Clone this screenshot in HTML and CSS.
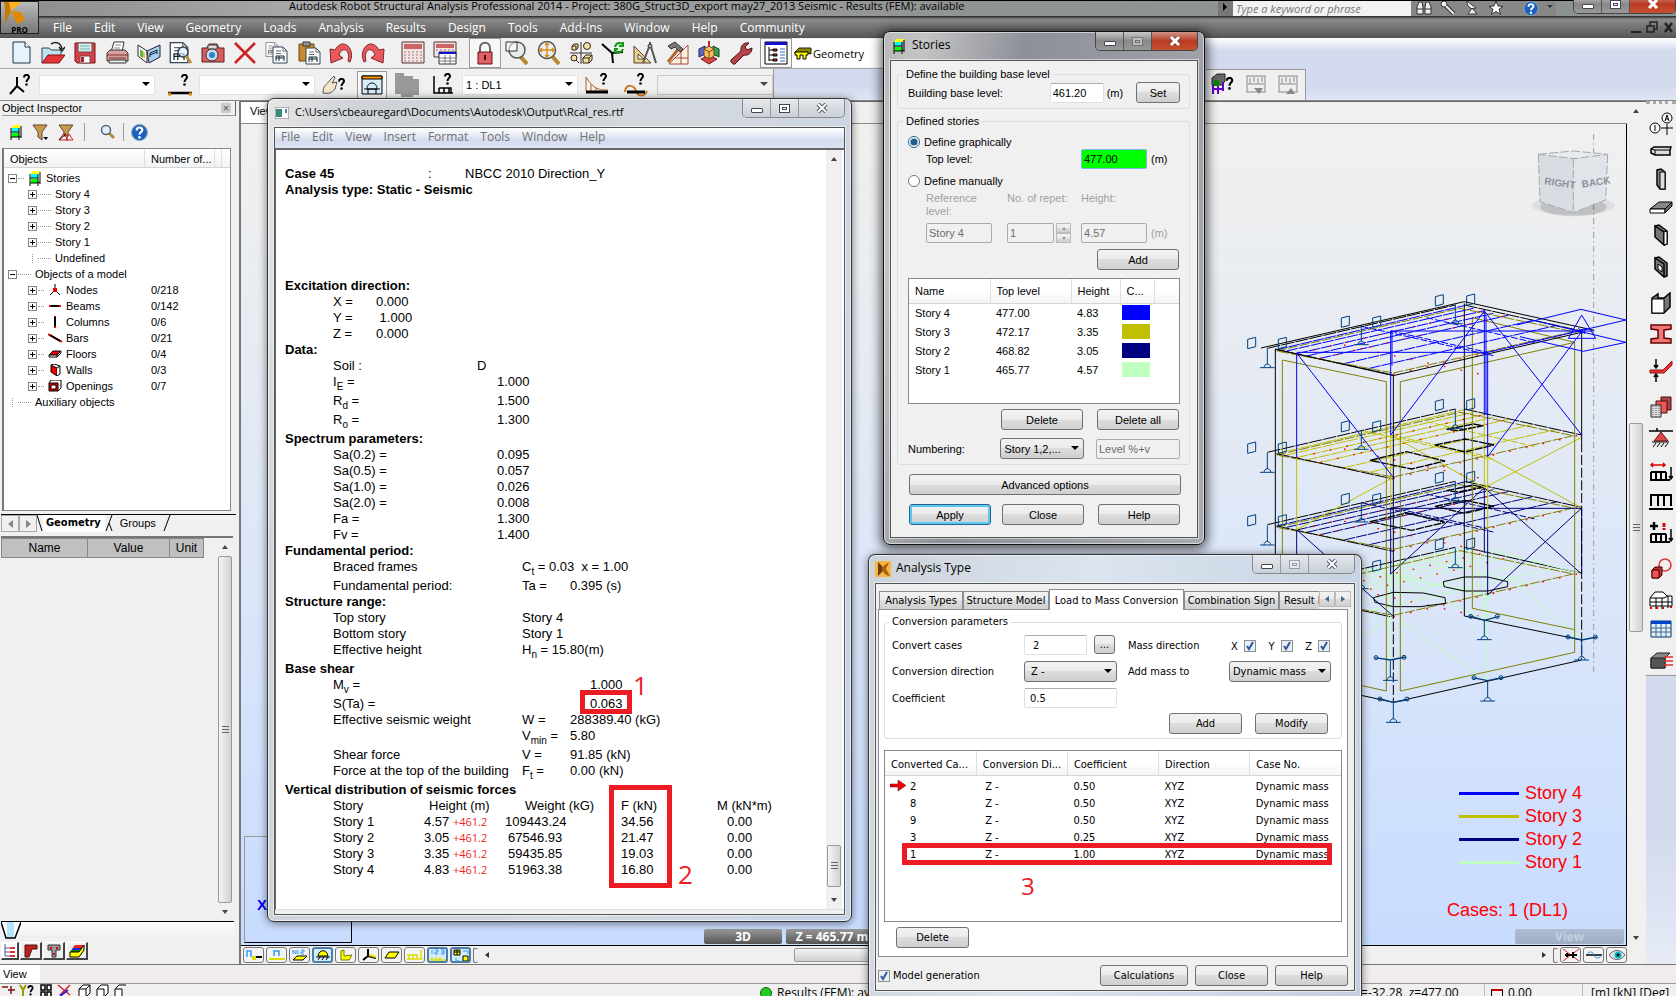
FILE: index.html
```
<!DOCTYPE html>
<html lang="en">
<head>
  <meta charset="UTF-8" />
  <meta name="viewport" content="width=device-width, initial-scale=1.0" />
  <title>Autodesk Robot Structural Analysis Professional 2014</title>
  <link rel="stylesheet" href="styles.css">
</head>
<body>
  <!-- Shared icons -->
  <svg class="defs" width="0" height="0">
    <symbol id="i-story" viewBox="0 0 12 15"><path d="M1 3l3-3h7l-2 3z" fill="#ff0"/><path d="M2 3h7v4H2z" fill="#0ff"/><path d="M2 8h7v4H2z" fill="#0f0"/><path d="M1 3v12M9 3v12M11 1v12M1 7h8M1 12h8l2-1" fill="none" stroke="#000"/></symbol>
    <symbol id="i-help" viewBox="0 0 16 16"><circle cx="8" cy="8" r="7.500" fill="#1d5fc0" stroke="#8ab"/><path d="M5.300 6c0-3.500 5.400-3.500 5.400-.3C10.700 7.600 8 7.600 8 9.800" fill="none" stroke="#fff" stroke-width="2"/><circle cx="8" cy="12.500" r="1.300" fill="#fff"/></symbol>
    <symbol id="i-q" viewBox="0 0 8 12"><path d="M1.500 3.500C1.500 0 6.500 0 6.500 3.200 6.500 5 4 5.500 4 8" fill="none" stroke="#000" stroke-width="2"/><circle cx="4" cy="10.500" r="1.300"/></symbol>
    <symbol id="i-sheet" viewBox="0 0 16 18"><path d="M1 1h10l4 4v12H1z" fill="#fff" stroke="#345"/><path d="M11 1v4h4M4 5h5M4 7.500h5" fill="none" stroke="#666"/><path d="M4 15v-5h8v5M4 12h8M7 10v5" fill="none" stroke="#123"/></symbol>
    <symbol id="i-mag" viewBox="0 0 16 16"><path d="M9 9l5 5" stroke="#b98a3a" stroke-width="3"/><circle cx="6" cy="6" r="4.500" fill="#dff0ff" stroke="#567" stroke-width="1.500"/></symbol>
    <symbol id="i-brick" viewBox="0 0 24 14"><path d="M1 9l9-7h13l-7 7z" fill="#888" stroke="#000"/><path d="M1 9h15v4H1z" fill="#fff" stroke="#000"/><path d="M16 9l7-7v4l-7 7z" fill="#666" stroke="#000"/></symbol>
    <symbol id="i-load" viewBox="0 0 24 20"><path d="M1 18h20M2 10v8M7 10v8M12 10v8M17 10v8M2 10h15" fill="none" stroke="#000" stroke-width="2"/><path d="M22 5v12M20 14l2 3 2-3" fill="none" stroke="#000" stroke-width="1.500"/></symbol>
  </svg>

  <div class="app">
    <!-- Title bar -->
    <header class="titlebar">
      <div class="pro">
        <svg width="34" height="23" viewBox="0 0 34 23"><path d="M3 0h5l2 9-6 13V8z" fill="#c87a00"/><path d="M8 0h13L10 9z" fill="#ffb31a"/><path d="M10 9l10 1 4 8-8 4z" fill="#e08a00"/></svg>
        <b>PRO</b>
      </div>
      <div class="titlebar-text">Autodesk Robot Structural Analysis Professional 2014 - Project: 380G_Struct3D_export may27_2013 Seismic - Results (FEM): available</div>
      <div class="search">
        <span class="search-arrow"></span>
        <input type="text" aria-label="Search" placeholder="Type a keyword or phrase">
      </div>
      <div class="title-icons">
        <svg width="16" height="14" viewBox="0 0 16 14"><path d="M1 13V6l2-5h3l1 5v7zM9 13V6l1-5h3l2 5v7z" fill="#eee" stroke="#333"/><path d="M1 8h6M9 8h6" stroke="#333"/></svg>
        <svg width="16" height="14" viewBox="0 0 16 14"><circle cx="4" cy="3" r="3" fill="#eee" stroke="#333"/><path d="M6 5l8 8" stroke="#333" stroke-width="4"/><path d="M6 5l8 8" stroke="#eee" stroke-width="2"/></svg>
        <svg width="16" height="14" viewBox="0 0 16 14"><path d="M3 0c0 7 5 9 9 7zM8 7l-4 6h9z" fill="#eee" stroke="#333"/></svg>
        <svg width="16" height="14" viewBox="0 0 16 14"><path d="M8 0l2 5 5 .3-4 3 1.500 5L8 10.500 3.500 13.300 5 8.300 1 5.300 6 5z" fill="#fff" stroke="#333"/></svg>
        <svg class="title-help" width="16" height="15"><use href="#i-help"/></svg>
        <i class="caret"></i>
      </div>
      <div class="winbtns dark main-btns">
        <button aria-label="Minimize"><i class="min"></i></button><button aria-label="Restore"><i class="max"></i></button><button class="close" aria-label="Close"><svg width="12" height="10" viewBox="0 0 12 10"><path d="M2 1l8 8M10 1L2 9" stroke="#fff" stroke-width="3"/></svg></button>
      </div>
    </header>

    <!-- Menu -->
    <nav class="menubar">
      <a href="#">File</a><a href="#">Edit</a><a href="#">View</a><a href="#">Geometry</a><a href="#">Loads</a><a href="#">Analysis</a><a href="#">Results</a><a href="#">Design</a><a href="#">Tools</a><a href="#">Add-Ins</a><a href="#">Window</a><a href="#">Help</a><a href="#">Community</a>
      <svg class="mdi" width="46" height="14" viewBox="0 0 46 14"><path d="M1 11h10" stroke="#222" stroke-width="2"/><path d="M17 5h7v6h-7zM20 5V1h7v7h-3" fill="none" stroke="#222" stroke-width="1.500"/><path d="M35 2l7 9M42 2l-7 9" stroke="#222" stroke-width="2.500"/></svg>
    </nav>

    <!-- Toolbars -->
    <div class="toolbars">
      <div class="toolbar">
        <button aria-label="New"><svg width="24" height="24" viewBox="0 0 24 24"><path d="M4 1h12l5 5v16H4z" fill="#e4f3fc" stroke="#234"/><path d="M16 1v5h5" fill="#fff" stroke="#234"/></svg></button>
        <button aria-label="Open"><svg width="24" height="24" viewBox="0 0 24 24"><path d="M1 22V7h7l2 2h10v5" fill="#bfe3f5" stroke="#345"/><path d="M1 22l6-8h17l-6 8z" fill="#e3343c" stroke="#811"/><path d="M10 3c5-3 10-1 11 5M18 6l3 4 3-4" fill="none" stroke="#222" stroke-width="1.500"/></svg></button>
        <button aria-label="Save"><svg width="24" height="24" viewBox="0 0 24 24"><path d="M2 2h20v20H4l-2-2z" fill="#d6404a" stroke="#711"/><path d="M5 2h14v9H5z" fill="#cdeff0" stroke="#744"/><path d="M7 15h10v7H7z" fill="#fff" stroke="#744"/><path d="M8 16h3v5H8z" fill="#a22"/><path d="M7 5h10M7 8h10" stroke="#8aa"/></svg></button>
        <button aria-label="Print"><svg width="24" height="24" viewBox="0 0 24 24"><path d="M6 11L9 1h10l-2 10z" fill="#fff" stroke="#333"/><path d="M2 12l3-3h15l3 3v8H2z" fill="#d9a0a0" stroke="#333"/><path d="M2 14h21M4 17h17" stroke="#733"/><path d="M4 19h17v3H4z" fill="#eee" stroke="#333"/><path d="M10 4h6M9 7h6" stroke="#888"/></svg></button>
        <button aria-label="Printout composition"><svg width="24" height="24" viewBox="0 0 24 24"><path d="M1 4l9 6v12L1 15z" fill="#fff" stroke="#223"/><path d="M3 8l3 2v7l-3-2z" fill="#5b5"/><path d="M6 10l2 2v6l-2-2z" fill="#e6c33a"/><path d="M10 10l13-6v12l-11 6z" fill="#a9cdea" stroke="#223"/><path d="M13 16v-4l7-3v4M13 14l7-3" fill="none" stroke="#124"/></svg></button>
        <button aria-label="Preview"><svg width="24" height="24" viewBox="0 0 24 24"><use href="#i-sheet" width="20" height="23"/><circle cx="14" cy="11" r="5" fill="#dff0ffaa" stroke="#345" stroke-width="1.500"/><path d="M17 15l5 7" stroke="#c08a3a" stroke-width="3"/></svg></button>
        <button aria-label="Screen capture"><svg width="24" height="24" viewBox="0 0 24 24"><path d="M1 7h5l2-4h8l2 4h5v14H1z" fill="#dc5a60" stroke="#522"/><path d="M7 4h9v4H7z" fill="#ddd" stroke="#444"/><circle cx="11" cy="14" r="6" fill="#cde" stroke="#333"/><circle cx="11" cy="14" r="3" fill="#2b82c9"/></svg></button>
        <button aria-label="Delete"><svg width="24" height="24" viewBox="0 0 24 24"><path d="M2 2l20 20M22 2L2 22" stroke="#c22" stroke-width="2.500"/></svg></button>
        <button aria-label="Copy"><svg width="24" height="24" viewBox="0 0 24 24"><use href="#i-sheet" width="14" height="17" opacity=".6"/><use href="#i-sheet" x="7" y="5" width="16" height="18"/></svg></button>
        <button aria-label="Paste"><svg width="24" height="24" viewBox="0 0 24 24"><path d="M2 3h15v17H2z" fill="#c98a2b" stroke="#642"/><path d="M6 1h7v4H6z" fill="#999" stroke="#333"/><use href="#i-sheet" x="8" y="6" width="16" height="18"/></svg></button>
        <button aria-label="Undo"><svg width="24" height="24" viewBox="0 0 24 24"><path d="M21 21C27 8 14-5 6 9L1 8l1 14 12-5-4-3c3-9 12-6 9 6z" fill="#e8595e" stroke="#822"/></svg></button>
        <button aria-label="Redo"><svg width="24" height="24" viewBox="0 0 24 24"><path d="M3 21C-3 8 10-5 18 9l5-1-1 14-12-5 4-3C11 5 2 8 5 20z" fill="#e8595e" stroke="#822"/></svg></button>
        <button class="gap" aria-label="Calculations"><svg width="24" height="24" viewBox="0 0 24 24"><path d="M1 1h22v21H1z" fill="#f3e4e4" stroke="#533"/><path d="M3 3h18v5H3z" fill="#c66"/><path d="M3 11h18M3 14h18M3 17h18M3 20h18" stroke="#a77" stroke-dasharray="2 2"/></svg></button>
        <button aria-label="Results"><svg width="24" height="24" viewBox="0 0 24 24"><path d="M1 1h22v15H1z" fill="#f3e4e4" stroke="#533"/><path d="M3 3h18v4H3z" fill="#c66"/><path d="M3 9h18" stroke="#a77" stroke-dasharray="2 2"/><path d="M6 11h17v12H6z" fill="#fff" stroke="#333"/><path d="M6 11h17v2H6z" fill="#11c"/><path d="M6 17h17M6 20h17M12 14v9M17 14v9" stroke="#777"/></svg></button>
        <button class="pressed" aria-label="Lock results"><svg width="24" height="24" viewBox="0 0 24 24"><path d="M7 12V7c0-7 10-7 10 0v5" fill="none" stroke="#666" stroke-width="2"/><path d="M5 11h14v12H5z" fill="#e06068" stroke="#611"/><path d="M12 14v5" stroke="#411" stroke-width="2"/></svg></button>
        <button aria-label="Zoom window"><svg width="24" height="24" viewBox="0 0 24 24"><path d="M15 15l7 8" stroke="#b7892f" stroke-width="4"/><circle cx="12" cy="9" r="8" fill="#e8eef0" stroke="#555" stroke-width="1.500"/><path d="M1 1h11v9H1z" fill="#fff8" stroke="#333"/></svg></button>
        <button aria-label="Zoom all"><svg width="24" height="24" viewBox="0 0 24 24"><path d="M15 15l7 8" stroke="#b7892f" stroke-width="4"/><circle cx="10" cy="9" r="8.500" fill="#e8eef0" stroke="#555" stroke-width="1.500"/><path d="M10 2v14M3 9h14M8 4l2-2 2 2M8 14l2 2 2-2M5 7L3 9l2 2M15 7l2 2-2 2" fill="none" stroke="#d98e1b" stroke-width="1.500"/></svg></button>
        <button aria-label="Views"><svg width="24" height="24" viewBox="0 0 24 24"><path d="M12 1v22M1 12h22" stroke="#333"/><path d="M3 5l2-2h4v4L7 9H3zM3 5h4v4" fill="#f3e0a8" stroke="#321"/><circle cx="18" cy="5" r="3.500" fill="#f3e0a8" stroke="#321"/><circle cx="5" cy="17" r="3" fill="#f3e0a8" stroke="#321"/><path d="M7 19l3 3M14 17l3-3h6v5l-3 3h-6zM14 17h6v5M20 17l3-3" fill="#f3e0a8" stroke="#321"/></svg></button>
        <button aria-label="Redraw"><svg width="24" height="24" viewBox="0 0 24 24"><path d="M1 3l10 9 1 10M11 12l11-1" fill="none" stroke="#000" stroke-width="2"/><path d="M14 6c1-5 7-5 8-2M22 1v4h-4M22 8c-2 5-7 4-8 1M14 12V8h3" fill="none" stroke="#191" stroke-width="2"/></svg></button>
        <button aria-label="Snap"><svg width="24" height="24" viewBox="0 0 24 24"><path d="M1 5v17h17z" fill="#efd08c" stroke="#543"/><path d="M5 13v5h6z" fill="#fff" stroke="#543"/><path d="M16 6l-6 16M18 6l5 16M17 1v5" stroke="#555" stroke-width="2"/><circle cx="17" cy="5" r="2" fill="#aaa" stroke="#333"/></svg></button>
        <button aria-label="Preferences"><svg width="24" height="24" viewBox="0 0 24 24"><path d="M23 4v19H4zM10 17h13M16 11v12" fill="#fff4e0" stroke="#a44"/><path d="M3 21L15 6" stroke="#b06a2a" stroke-width="3"/><path d="M3 5l7-4 8 7-3 3-5-5-4 2z" fill="#777" stroke="#333"/></svg></button>
        <button aria-label="View 3D"><svg width="24" height="24" viewBox="0 0 24 24"><path d="M2 8l6-3v8l-6 3z" fill="#5a6ad0" stroke="#225"/><path d="M16 5l6 3v8l-6-3z" fill="#3ba05a" stroke="#142"/><path d="M4 18l8-4 8 4-8 5z" fill="#d44" stroke="#622"/><path d="M7 8l5-3 5 3v7l-5 3-5-3z" fill="#ffbd55" stroke="#642"/><path d="M7 8l5 3 5-3M12 11v7" fill="none" stroke="#642"/><path d="M12 0v5" stroke="#c22" stroke-width="2"/></svg></button>
        <button aria-label="Tools"><svg width="24" height="24" viewBox="0 0 24 24"><path d="M2 19l10-9c-1-5 3-9 8-8l-4 4 2 3 5-2c0 5-4 8-8 7L6 23c-2 1-5-2-4-4z" fill="#b8434a" stroke="#411"/></svg></button>
        <button class="pressed gap2" aria-label="Object inspector"><svg width="24" height="24" viewBox="0 0 24 24"><path d="M1 1h22v22H1z" fill="#fff" stroke="#000"/><path d="M1 1h22v3H1z" fill="#11c"/><path d="M5 6v14M5 9h6M5 14h6M5 19h6" fill="none" stroke="#000"/><path d="M9 8h4v2H9zM9 13h4v2H9zM9 18h4v2H9z" fill="#d22" stroke="#000"/><path d="M16 8h5M16 11h5M16 14h5M16 17h5M16 20h5" stroke="#36c"/></svg></button>
        <label class="layout-combo"><svg width="18" height="13" viewBox="0 0 18 13"><path d="M1 5l4-4h12v6l-3-1H1z" fill="#880" stroke="#220"/><path d="M1 5h13v3h-2v4H9V8H6v4H3V8H1z" fill="#ff0" stroke="#000"/></svg><select aria-label="Layout"><option>Geometry</option></select></label>
      </div>
      <div class="toolbar-row">
        <div class="toolbar second">
          <svg width="24" height="24" viewBox="0 0 24 24"><path d="M2 21l7-8V4M9 13l7 6" fill="none" stroke="#000" stroke-width="2"/><use href="#i-q" x="14" y="1" width="9" height="12"/></svg>
          <select class="combo" aria-label="Nodes"><option></option></select>
          <svg class="g-bar" width="24" height="24" viewBox="0 0 24 24"><path d="M0 20h24" stroke="#000" stroke-width="2.500"/><path d="M0 21h3M21 21h3" stroke="#d80" stroke-width="3"/><use href="#i-q" x="12" y="1" width="9" height="12"/></svg>
          <select class="combo" aria-label="Bars"><option></option></select>
          <svg width="24" height="24" viewBox="0 0 24 24"><path d="M1 20c0-8 4-8 7-13l4-4 1 2-3 5 5-1-2 7c-3 4-6 5-12 4z" fill="#f3e6cc" stroke="#555"/><use href="#i-q" x="15" y="5" width="9" height="12"/></svg>
          <button class="pressed" aria-label="Attributes"><svg width="22" height="22" viewBox="0 0 22 22"><path d="M1 2h20v18H1z" fill="#d9ecfa" stroke="#000"/><path d="M1 2h20v3H1z" fill="#f90" stroke="#000"/><path d="M6 15c0-8 10-8 10 0zM3 15h16M7 15v5M15 15v5" fill="none" stroke="#000"/></svg></button>
          <svg width="26" height="26" viewBox="0 0 26 26"><path d="M1 1h9v3h9v3h6v16h-6v2H7v-3H1z" fill="#999"/></svg>
          <svg class="g-load" width="24" height="24" viewBox="0 0 24 24"><path d="M3 3v17h19M8 15v5M13 15v5M18 15v5M8 15h12v5" fill="none" stroke="#000" stroke-width="1.500"/><use href="#i-q" x="12" y="0" width="9" height="12"/></svg>
          <select class="combo" aria-label="Load case"><option>1 : DL1</option></select>
          <svg width="24" height="24" viewBox="0 0 24 24"><path d="M1 4c5 8 10 14 22 13M1 4v14M6 11v7M11 15v3" fill="none" stroke="#a62"/><path d="M1 19h22" stroke="#000" stroke-width="3"/><use href="#i-q" x="14" y="0" width="9" height="12"/></svg>
          <svg class="g-def" width="24" height="24" viewBox="0 0 24 24"><path d="M1 19c1-9 9-7 11-1s8 6 11 0" fill="none" stroke="#c72" stroke-width="2"/><path d="M3 19h18" stroke="#000" stroke-width="3"/><use href="#i-q" x="12" y="0" width="9" height="12"/></svg>
          <select class="combo" aria-label="Mode" disabled><option></option></select>
        </div>
        <div class="toolbar third">
          <svg width="24" height="24" viewBox="0 0 24 24"><path d="M2 5l5-4h8v7l-3 4H2z" fill="#666" stroke="#222"/><path d="M3 12v9M8 12v9M13 9v9M3 16h9" stroke="#60c" stroke-width="2"/><path d="M4 7h5v6H4z" fill="#080"/><use href="#i-q" x="15" y="4" width="9" height="13"/></svg>
          <svg width="20" height="22" viewBox="0 0 20 22"><path d="M1 2h18v16H1zM4 4v6M8 3v5M12 4v6M16 3v5M2 10h16" fill="#eee" stroke="#aaa" stroke-width="1.500"/><path d="M8 14h9l-4 6z" fill="#888"/></svg>
          <svg width="20" height="22" viewBox="0 0 20 22"><path d="M1 2h18v16H1zM4 4v6M8 3v5M12 4v6M16 3v5M2 10h16" fill="#eee" stroke="#aaa" stroke-width="1.500"/><path d="M8 20h9l-4-6z" fill="#888"/></svg>
        </div>
      </div>
    </div>

    <!-- Workspace -->
    <main class="workspace">
      <aside class="dock">
        <div class="dock-title"><span>Object Inspector</span><button aria-label="Close panel">×</button></div>
        <div class="dock-tools">
          <svg width="12" height="15"><use href="#i-story"/></svg>
          <svg width="16" height="17" viewBox="0 0 16 17"><path d="M1 1h14l-5 7v8l-4-3V8z" fill="#c99a4a" stroke="#643"/><path d="M11 13h5l-2 3z"/></svg>
          <svg width="16" height="17" viewBox="0 0 16 17"><path d="M1 1h14l-5 7v4H6V8z" fill="#c99a4a" stroke="#643"/><path d="M1 16l5-7 4 7zM8 16l3-6 4 6z" fill="none" stroke="#c22"/><path d="M1 16l7-6" stroke="#000"/></svg>
          <i class="sep"></i>
          <svg class="find" width="16" height="16"><use href="#i-mag"/></svg>
          <i class="sep"></i>
          <svg width="17" height="17"><use href="#i-help"/></svg>
        </div>
        <div class="tree">
          <div class="tree-head"><span>Objects</span><span>Number of...</span><span></span></div>
          <ul class="tree-list">
            <li><i class="box minus"></i><i class="dots"></i><svg width="12" height="15"><use href="#i-story"/></svg><span>Stories</span></li>
            <li class="l2"><i class="box plus"></i><i class="dots long"></i><span>Story 4</span></li>
            <li class="l2"><i class="box plus"></i><i class="dots long"></i><span>Story 3</span></li>
            <li class="l2"><i class="box plus"></i><i class="dots long"></i><span>Story 2</span></li>
            <li class="l2"><i class="box plus"></i><i class="dots long"></i><span>Story 1</span></li>
            <li class="l2"><i class="box none"></i><i class="dots long"></i><span>Undefined</span></li>
            <li><i class="box minus"></i><i class="dots long"></i><span>Objects of a model</span></li>
            <li class="l2 obj"><i class="box plus"></i><i class="dots"></i><svg width="14" height="12" viewBox="0 0 14 12"><path d="M7 0v6l-5 5M7 6l5 5" fill="none" stroke="#000"/><path d="M5 4h4v4H5z" fill="#e00"/></svg><span>Nodes</span><b>0/218</b></li>
            <li class="l2 obj"><i class="box plus"></i><i class="dots"></i><svg width="14" height="12" viewBox="0 0 14 12"><path d="M1 6h12" stroke="#e00" stroke-width="2"/><path d="M3 6h8" stroke="#000" stroke-width="2"/></svg><span>Beams</span><b>0/142</b></li>
            <li class="l2 obj"><i class="box plus"></i><i class="dots"></i><svg width="14" height="12" viewBox="0 0 14 12"><path d="M7 0v12" stroke="#e00" stroke-width="2"/><path d="M7 1v9" stroke="#000" stroke-width="2"/></svg><span>Columns</span><b>0/6</b></li>
            <li class="l2 obj"><i class="box plus"></i><i class="dots"></i><svg width="14" height="12" viewBox="0 0 14 12"><path d="M0 2l14 8" stroke="#e00" stroke-width="2"/><path d="M2 3l10 6" stroke="#000" stroke-width="2"/></svg><span>Bars</span><b>0/21</b></li>
            <li class="l2 obj"><i class="box plus"></i><i class="dots"></i><svg width="14" height="12" viewBox="0 0 14 12"><path d="M1 7l4-4h8L9 7z" fill="#e00" stroke="#000"/><path d="M1 7h8v2H1zM9 9l4-4V3" fill="#fff" stroke="#000"/></svg><span>Floors</span><b>0/4</b></li>
            <li class="l2 obj"><i class="box plus"></i><i class="dots"></i><svg width="14" height="12" viewBox="0 0 14 12"><path d="M3 1l6 3v8L3 8z" fill="#e00" stroke="#000"/><path d="M9 4l3-2v8l-3 2M3 1l3-1 6 2" fill="#fff" stroke="#000"/></svg><span>Walls</span><b>0/3</b></li>
            <li class="l2 obj"><i class="box plus"></i><i class="dots"></i><svg width="14" height="12" viewBox="0 0 14 12"><path d="M1 3h9v8H1z" fill="#e00" stroke="#000"/><path d="M3 5h5v4H3z" fill="#fff" stroke="#000"/><path d="M1 3l2-3h10v8l-3 3" fill="none" stroke="#000"/></svg><span>Openings</span><b>0/7</b></li>
            <li><i class="box none"></i><i class="dots long"></i><span>Auxiliary objects</span></li>
          </ul>
        </div>
        <div class="sheet-tabs">
          <button class="nav-l" aria-label="Previous"></button><button class="nav-r" aria-label="Next"></button>
          <svg class="slash" width="6" height="17" viewBox="0 0 6 17"><path d="M0 0l5 16" stroke="#000"/></svg>
          <a class="on" href="#">Geometry</a>
          <svg class="slash" width="8" height="17" viewBox="0 0 8 17"><path d="M7 0L1 16M4 8l3 8" stroke="#000"/></svg>
          <a href="#">Groups</a>
          <svg class="slash" width="8" height="17" viewBox="0 0 8 17"><path d="M7 0L1 16" stroke="#000"/></svg>
        </div>
        <div class="props">
          <div class="props-main">
            <table class="props-table"><thead><tr><th>Name</th><th>Value</th><th>Unit</th></tr></thead></table>
          </div>
          <div class="vscroll"><i class="up"></i><i class="thumb"><i class="grip"></i></i><i class="down"></i></div>
        </div>
        <div class="strip"><svg width="20" height="17" viewBox="0 0 20 17"><path d="M0 0h20l-5 16H5z" fill="#fff"/><path d="M6 0h7v16H6z" fill="#b5e5fa"/><path d="M0 0l5 16h9l6-16" fill="none" stroke="#000" stroke-width="1.500"/></svg></div>
        <div class="dock-btns">
          <button class="on" aria-label="Tree"><svg width="14" height="14" viewBox="0 0 14 14"><path d="M2 0v12h5M2 4h5M2 8h5" fill="none" stroke="#558"/><path d="M7 3h5v2H7zM7 7h5v2H7zM7 11h5v2H7z" fill="#d33"/></svg></button>
          <button aria-label="Steel"><svg width="14" height="14" viewBox="0 0 14 14"><path d="M1 1h12v4H8L5 13H1z" fill="#b22" stroke="#511"/></svg></button>
          <button aria-label="Concrete"><svg width="14" height="14" viewBox="0 0 14 14"><path d="M1 1h12v5H9v7H5V6H1z" fill="#999" stroke="#333"/><path d="M3 3h2v2H3zM9 3h2v2H9zM6 9h2v2H6z" fill="#d00"/></svg></button>
          <button aria-label="Maps"><svg width="16" height="14" viewBox="0 0 16 14"><path d="M1 8l5-7h9l-5 7z" fill="#080"/><path d="M4 4l2-3h9l-2 3z" fill="#e22"/><path d="M3 6l1-2h9l-1 2z" fill="#22e"/><path d="M1 8h9l5-7v5l-5 7H1z" fill="#ff0" stroke="#000"/></svg></button>
        </div>
      </aside>

      <section class="view">
        <div class="view-col">
          <div class="view-head"><span>View</span></div>
          <div class="canvas">
            <div class="inset"><b>X</b></div>
            <!-- Structure model -->
            <svg class="model" width="406" height="821" viewBox="0 87 1218 2463" fill="none" stroke-width="3">
              <defs>
                <g id="support"><path d="M0 0v48M-22 58H22M-10 58c0-14 20-14 20 0" stroke="#004080"/></g>
                <path id="tag" d="M-12 -12l24-6v28l-24 6z" stroke="#004080"/>
                <g id="tags"><use href="#tag" x="95" y="745"/><use href="#tag" x="187" y="745"/><use href="#tag" x="376" y="681"/><use href="#tag" x="470" y="681"/><use href="#tag" x="658" y="617"/><use href="#tag" x="752" y="615"/><use href="#support" x="142" y="760"/><use href="#support" x="424" y="691"/><use href="#support" x="706" y="628"/></g>
                <g id="floor">
                  <path d="M170 764L733 632M230 776L793 647M301 790l563-129M372 806l563-129M448 820l563-129M200 768l560-128M260 783l560-128" stroke="currentColor" stroke-dasharray="34 3"/>
                  <path d="M512 708L803 772M424 694l396 88M620 668l330 76" stroke="currentColor" stroke-dasharray="20 6"/>
                  <path d="M170 768L720 640l340 70-540 124z" stroke="#808000" stroke-dasharray="30 5"/>
                  <path d="M142 760L706 630M733 630l352 78M170 764l350 76" stroke="#000" stroke-dasharray="40 3"/>
                  <path d="M230 776L793 647M301 790l560-128M520 838l560-130M372 750l420 90" stroke="#f00" stroke-width="4" stroke-dasharray="5 46"/>
                </g>
                <path id="openings" d="M645 1050l90-18 87 18-87 21zM450 1096l110-26 115 28-100 24zM680 1003l80-16 30 5-75 15z" stroke="#000" stroke-width="4" stroke-dasharray="24 3"/>
              </defs>
              <path d="M1121 117V1730" stroke="#999" stroke-dasharray="18 10 4 10"/>
              <!-- levels from the ground up -->
              <g color="#c0ffc0"><use href="#floor" y="727"/><path d="M230 1500v200M512 1437v258M793 1360v215M803 1500v257M520 1564l-290 190M541 1580l262 177M512 1437l281 138M860 1440l225 195M793 1360l290 76" stroke="currentColor"/></g>
              <path d="M670 1460l63-14h70l60 14v15l-60 13h-70l-61-13zM460 1508l60-16 90 2 65 14 2 17-77 10h-80l-55-13z" stroke="#000"/>
              <g color="#000080"><use href="#floor" y="529"/><path d="M230 1304v190M512 1239v198M793 1178v196M803 1302v198M1085 1239v198M230 1304l290 260M793 1178l-281 259M793 1178l292 259M1085 1239l-282 261M512 1240h573" stroke="currentColor"/></g>
              <use href="#openings" y="184"/>
              <g color="#c0c000"><use href="#floor" y="312"/><path d="M230 1088v216M512 1020v218M793 960v218M803 1085v217M520 1147l-290 157M793 1178l290-150M803 1085l282 154M512 1020l281 158" stroke="currentColor"/></g>
              <use href="#openings"/>
              <!-- walls -->
              <path d="M187 1720V795l312 65v928L187 1720M541 860l523-118v930l-523 116zM757 1540V668l307 74M757 1540l307 64" stroke="#808000"/>
              <path d="M166 762v1000M520 842v700M733 625v938l352 72M1085 712v330M123 759l610-139 390 86M166 762l354 80 565-130M166 1745l354 77 565-127" stroke="#000"/>
              <path d="M520 1542v280M1085 1042v650" stroke="#000" stroke-dasharray="30 8"/>
              <!-- roof -->
              <g color="#0000ff"><use href="#floor"/><path d="M230 774v314M512 708v312M516 708v104M793 645v315M798 660v300M803 770v315M230 774l290 373M793 648l-281 372M793 648l292 372M1085 710L803 1085M512 708h608M230 772h573M890 690l193-47 135 32-415 97M935 675l283 67-128 27-190-44M1085 660l-40 70h82zM1070 708l30-8-10 14zM1075 700l20 16" stroke="currentColor"/></g>
              <use href="#tags"/><use href="#tags" y="314"/><use href="#tags" y="532"/><use href="#tags" y="732"/>
              <use href="#support" x="520" y="1824"/><use href="#support" x="803" y="1760"/><use href="#support" x="793" y="1576"/><use href="#support" x="511" y="1698"/><use href="#support" x="1085" y="1637"/>
              <path d="M475 1810l45 12 45-8M757 1748l46 9 46-10M747 1562l46 14 44-12M465 1688l46 7 46-9M1040 1625l45 10 46-9" stroke="#004080" stroke-width="4"/>
              <g stroke="#004080"><circle cx="480" cy="1812" r="6"/><circle cx="561" cy="1812" r="6"/><circle cx="762" cy="1748" r="6"/><circle cx="843" cy="1748" r="6"/><circle cx="752" cy="1564" r="6"/><circle cx="832" cy="1564" r="6"/><circle cx="468" cy="1688" r="6"/><circle cx="552" cy="1687" r="6"/><circle cx="1044" cy="1626" r="6"/><circle cx="1126" cy="1626" r="6"/></g>
              <!-- view cube -->
              <g stroke="none">
                <ellipse cx="1060" cy="332" rx="125" ry="28" fill="#0001"/>
                <ellipse cx="1060" cy="336" rx="100" ry="28" fill="#0002"/>
                <path d="M955 178l105-10 103 10-103 13z" fill="#e8eaed"/>
                <path d="M955 178l105 13v162l-100-33z" fill="#d9dce2"/>
                <path d="M1060 191l103-13-6 137-97 38z" fill="#e1e4e9"/>
              </g>
              <path d="M955 178l105-10 103 10-103 13zM955 178l5 142 100 33 97-38 6-137M1060 191v162" stroke="#a4a8b0" stroke-dasharray="26 7"/>
              <g class="cube-text" stroke="none" fill="#8e939c"><text x="972" y="268" transform="rotate(8 972 268)">RIGHT</text><text x="1087" y="278" transform="rotate(-9 1087 278)">BACK</text></g>
            </svg>
            <div class="legend">
              <ul>
                <li><i class="c4"></i>Story 4</li>
                <li><i class="c3"></i>Story 3</li>
                <li><i class="c2"></i>Story 2</li>
                <li><i class="c1"></i>Story 1</li>
              </ul>
              <p>Cases: 1 (DL1)</p>
            </div>
            <div class="chips"><span>3D</span><span>Z = 465.77 m</span></div>
            <div class="chip-view">View</div>
          </div>
          <div class="view-foot">
            <button aria-label="Node numbers"><svg width="16" height="12" viewBox="0 0 16 12"><path d="M1 8V2h4v6" fill="none" stroke="#39f" stroke-width="1.500"/><path d="M6 9h4" stroke="#dd0" stroke-width="4"/><path d="M10 8h6" stroke="#000" stroke-width="2"/></svg></button>
            <button aria-label="Bar numbers"><svg width="16" height="12" viewBox="0 0 16 12"><path d="M5 7V2h5v5" fill="none" stroke="#39f" stroke-width="1.500"/><path d="M0 10h16" stroke="#dd0" stroke-width="2"/></svg></button>
            <button aria-label="Panel numbers"><svg width="16" height="12" viewBox="0 0 16 12"><path d="M1 5V1l3 4V1M6 1v4M9 1h3v2H9v2h3" fill="none" stroke="#39f"/><path d="M1 11l4-4h10l-4 4z" fill="#ff0" stroke="#000"/></svg></button>
            <button class="on" aria-label="Supports"><svg width="16" height="12" viewBox="0 0 16 12"><path d="M3 7c1-7 9-7 10 0z" fill="#ff0" stroke="#000"/><path d="M1 8h14M3 11l2-3M7 11l2-3M11 11l2-3" stroke="#000"/></svg></button>
            <button aria-label="Profiles"><svg width="16" height="12" viewBox="0 0 16 12"><path d="M3 2l3-1v6l8-1-3 5H3z" fill="#ff0" stroke="#770"/></svg></button>
            <button aria-label="Local axes"><svg width="16" height="12" viewBox="0 0 16 12"><path d="M7 0v7l8 2M7 7l-5 4" fill="none" stroke="#000" stroke-width="2"/><path d="M8 6l7 2" stroke="#dd0" stroke-width="2"/></svg></button>
            <button aria-label="Panels"><svg width="16" height="12" viewBox="0 0 16 12"><path d="M1 9l4-6h10l-4 6z" fill="#ff0" stroke="#000"/></svg></button>
            <button aria-label="Loads"><svg width="16" height="12" viewBox="0 0 16 12"><path d="M0 10h16M2 6v4M6 6v4M10 6v4M0 6h11M14 1v8" stroke="#dd0" stroke-width="1.500"/></svg></button>
            <button class="on" aria-label="Load values"><svg width="16" height="12" viewBox="0 0 16 12"><path d="M2 1v4M5 1h3v2H5v2h3M11 1h3v4h-3M11 3h3" fill="none" stroke="#39f"/><path d="M0 11h16M2 8v3M6 8v3M10 8v3" stroke="#dd0" stroke-width="1.500"/></svg></button>
            <button class="on" aria-label="Mesh"><svg width="16" height="12" viewBox="0 0 16 12"><path d="M1 1h6v5H1zM1 3h6M4 1v5M10 7h5v5h-5z" fill="#ff0" stroke="#000"/><path d="M10 2h5v3M3 9v3h4" fill="none" stroke="#39f"/></svg></button>
            <i class="bracket"></i>
            <div class="hscroll"><i class="left"></i><i class="hthumb"></i><i class="right"></i></div>
            <i class="bracket"></i>
            <button aria-label="No labels"><svg width="16" height="12" viewBox="0 0 16 12"><path d="M0 0l16 12M16 0L0 12" stroke="#e22"/><path d="M2 6h12M10 3v6M4 4v4" stroke="#000" stroke-width="2"/></svg></button>
            <button aria-label="Diagram"><svg width="16" height="12" viewBox="0 0 16 12"><path d="M0 6h16" stroke="#000" stroke-width="1.500"/><path d="M1 6c1-4 6-4 7 0s6 4 7 0" fill="none" stroke="#28d"/></svg></button>
            <button aria-label="Display"><svg width="16" height="12" viewBox="0 0 16 12"><path d="M0 6c4-6 12-6 16 0-4 6-12 6-16 0z" fill="#ddd" stroke="#666"/><circle cx="9" cy="6" r="3.500" fill="#0bc"/><circle cx="9" cy="6" r="1.500"/></svg></button>
          </div>
        </div>
        <div class="vscroll big"><i class="up"></i><i class="space"></i><i class="thumb"><i class="grip"></i></i><i class="space2"></i><i class="down"></i></div>
      </section>

      <!-- Right toolbar -->
      <div class="side">
        <div class="side-tools">
          <svg width="24" height="24" viewBox="0 0 24 24"><circle cx="18" cy="6" r="5" fill="#fff" stroke="#000"/><path d="M16 9l2-6 2 6M17 7h2" stroke="#000" fill="none"/><circle cx="6" cy="16" r="5" fill="#fff" stroke="#000"/><path d="M6 13v6M12 16h12M18 12v11" stroke="#000"/></svg>
          <svg width="22" height="12" viewBox="0 0 22 12"><path d="M1 3l3-2h17l-1 3v5H5l-4-2z" fill="#ddd" stroke="#000" stroke-width="1.500"/><path d="M1 3l4 1h15M5 4v5" fill="none" stroke="#000"/></svg>
          <svg width="12" height="22" viewBox="0 0 12 22"><path d="M2 2l4-1 4 3v17H5L2 17z" fill="#888" stroke="#000" stroke-width="1.500"/><path d="M5 4h5v17H5z" fill="#ddd" stroke="#000"/></svg>
          <svg width="24" height="14"><use href="#i-brick"/></svg>
          <svg width="16" height="22" viewBox="0 0 16 22"><path d="M2 2l9 6v13L2 13zM2 2l4-1 8 6v13l-3 1" fill="#777" stroke="#000" stroke-width="1.500"/><path d="M11 8l3-1v13l-3 1z" fill="#fff" stroke="#000"/></svg>
          <svg width="16" height="22" viewBox="0 0 16 22"><path d="M2 2l9 6v13L2 13zM2 2l4-1 8 6v13l-3 1" fill="#777" stroke="#000" stroke-width="1.500"/><path d="M5 8l4 3v5l-4-3z" fill="#fff" stroke="#000"/></svg>
          <svg class="sp" width="22" height="22" viewBox="0 0 22 22"><path d="M2 6l6-4v4h6l6-5v14l-6 6H2z" fill="#777" stroke="#000" stroke-width="1.500"/><path d="M2 7h12v14H2z" fill="#fff" stroke="#000"/></svg>
          <svg width="22" height="20" viewBox="0 0 22 20"><path d="M1 1h20v4l-7 1v8l7 1v4H1v-4l7-1V6L1 5z" fill="#e77" stroke="#600" stroke-width="1.500"/></svg>
          <svg class="sp" width="24" height="24" viewBox="0 0 24 24"><path d="M1 12h13l9-9v4L15 15H1z" fill="#e33" stroke="#811"/><path d="M7 1v9M5 7l2 3 2-3M7 24v-7M5 19l2-3 2 3" fill="none" stroke="#000" stroke-width="1.500"/></svg>
          <svg class="sp" width="22" height="22" viewBox="0 0 22 22"><path d="M11 1h10v13H11z" fill="#a44" stroke="#411"/><path d="M6 5h11v12H6z" fill="#e55" stroke="#411"/><path d="M1 9h10v12H1z" fill="#ddd" stroke="#222"/><path d="M3 10v10M6 10v10M9 10v10" stroke="#555" stroke-dasharray="1 1"/></svg>
          <svg width="24" height="20" viewBox="0 0 24 20"><path d="M0 3h24M8 3V0" stroke="#000" stroke-width="1.500"/><path d="M12 4l7 9H5z" fill="#d44" stroke="#611"/><path d="M3 14h17M4 19l3-4M8 19l3-4M12 19l3-4M16 19l3-4" stroke="#000"/></svg>
          <svg class="sp" width="24" height="20" viewBox="0 0 24 20"><path d="M2 3h14M4 1L2 3l2 2M14 1l2 2-2 2" fill="none" stroke="#d00" stroke-width="1.500"/><use href="#i-load" width="24" height="20"/></svg>
          <svg width="24" height="20" viewBox="0 0 24 20"><path d="M1 3h22M2 3v11M9 3v11M15 3v11M22 3v11M0 17h24" stroke="#000" stroke-width="2"/></svg>
          <svg width="24" height="22" viewBox="0 0 24 22"><path d="M1 4h8M5 0v8" stroke="#000" stroke-width="2.500"/><path d="M15 1v4M15 6v2" stroke="#d00" stroke-width="3"/><use href="#i-load" y="2" width="24" height="20"/></svg>
          <svg class="sp" width="22" height="22" viewBox="0 0 22 22"><circle cx="15" cy="7" r="6" fill="none" stroke="#d33" stroke-width="1.500"/><path d="M2 12l3-3h7v8l-3 3H2z" fill="#b33" stroke="#400"/><path d="M2 12h7v8H2z" fill="#e55" stroke="#400"/></svg>
          <svg width="24" height="20" viewBox="0 0 24 20"><path d="M1 8l5-6h8l4 4h5v10H1zM1 12h22M7 8v11M13 8v11M1 8h14l4-2M19 6v12" fill="#fff" stroke="#000"/><path d="M2 17v2M8 17v2M14 17v2M22 16v2" stroke="#d00" stroke-width="2"/></svg>
          <svg width="22" height="18" viewBox="0 0 22 18"><path d="M1 1h20v16H1z" fill="#dff0fa" stroke="#036"/><path d="M1 1h20v3H1z" fill="#04c"/><path d="M1 8h20M1 12h20M6 4v13M11 4v13M16 4v13" stroke="#468"/></svg>
          <svg class="sp" width="24" height="18" viewBox="0 0 24 18"><path d="M2 6l6-5h13l-5 5v10H2z" fill="#888" stroke="#222"/><path d="M2 6h14v10H2z" fill="#555" stroke="#222"/><path d="M15 5h9M15 9h9M15 13h9" stroke="#d33" stroke-width="1.500"/></svg>
        </div>
      </div>
    </main>

    <div class="doc-tabs"><span>View</span></div>
    <footer class="status">
      <svg width="126" height="14" viewBox="0 0 126 14"><path d="M2 3h6M11 2v8M8 6h7" stroke="#811" stroke-width="1.500"/><path d="M20 1l3 5 3-5M23 6v6" fill="none" stroke="#990" stroke-width="2"/><use href="#i-q" x="27" y="1" width="7" height="11"/><path d="M41 1h4v5h-4zM47 1h4v5h-4zM41 8h4v5h-4zM47 8h4v5h-4z" fill="none" stroke="#000" stroke-width="1.500"/><path d="M58 1l12 10M70 1L60 11" stroke="#d22" stroke-width="1.500"/><path d="M60 12l8-6" stroke="#22c" stroke-width="2"/><path d="M79 5h7v8h-7zM79 5l4-4h7v8l-4 4M86 5l4-4M97 5h7v8h-7zM97 5l4-4h7v8l-4 4M115 5h7v8h-7zM115 5l4-4h7" fill="#fff" stroke="#000"/></svg>
      <span class="st-result"><i></i>Results (FEM): available</span>
      <span class="st-xyz">x=6.92, y=-32.28, z=477.00</span>
      <span class="st-val"><i></i>0.00</span>
      <span class="st-units">[m] [kN] [Deg]</span>
    </footer>
  </div>

  <!-- Report window -->
  <section class="window report">
    <div class="win-title">
      <svg width="14" height="12" viewBox="0 0 14 12"><path d="M0 0h14v12H0z" fill="#fff" stroke="#667"/><path d="M1 2h6v8H1z" fill="#3a8a78"/><path d="M10 2h2v4h-2z" fill="#58a"/></svg>
      <h2>C:\Users\cbeauregard\Documents\Autodesk\Output\Rcal_res.rtf</h2>
      <div class="winbtns"><button aria-label="Minimize"><i class="min"></i></button><button aria-label="Maximize"><i class="max"></i></button><button class="close" aria-label="Close"><svg width="12" height="10" viewBox="0 0 12 10"><path d="M2 1l8 8M10 1L2 9" stroke="#556" stroke-width="4"/><path d="M2 1l8 8M10 1L2 9" stroke="#fff" stroke-width="2"/></svg></button></div>
    </div>
    <div class="win-body">
      <nav class="report-menu"><a href="#">File</a><a href="#">Edit</a><a href="#">View</a><a href="#">Insert</a><a href="#">Format</a><a href="#">Tools</a><a href="#">Window</a><a href="#">Help</a></nav>
      <div class="report-area">
        <article class="doc">
          <div class="case"><b>Case 45</b><span>:</span><span>NBCC 2010 Direction_Y</span></div>
          <h3>Analysis type: Static - Seismic</h3>
          <h3 class="after-gap">Excitation direction:</h3>
          <div class="r xyz"><span>X =</span><span>0.000</span></div>
          <div class="r xyz"><span>Y =</span><span>&nbsp;1.000</span></div>
          <div class="r xyz"><span>Z =</span><span>0.000</span></div>
          <h3>Data:</h3>
          <div class="r soil"><span>Soil :</span><span>D</span></div>
          <div class="r val sub"><span>I<sub>E</sub> =</span><span>1.000</span></div>
          <div class="r val sub"><span>R<sub>d</sub> =</span><span>1.500</span></div>
          <div class="r val sub"><span>R<sub>o</sub> =</span><span>1.300</span></div>
          <h3>Spectrum parameters:</h3>
          <div class="r val"><span>Sa(0.2) =</span><span>0.095</span></div>
          <div class="r val"><span>Sa(0.5) =</span><span>0.057</span></div>
          <div class="r val"><span>Sa(1.0) =</span><span>0.026</span></div>
          <div class="r val"><span>Sa(2.0) =</span><span>0.008</span></div>
          <div class="r val"><span>Fa =</span><span>1.300</span></div>
          <div class="r val"><span>Fv =</span><span>1.400</span></div>
          <h3>Fundamental period:</h3>
          <div class="r wide sub"><span>Braced frames</span><span>C<sub>t</sub> = 0.03 &nbsp;x = 1.00</span></div>
          <div class="r wide"><span>Fundamental period:</span><span>Ta =</span><span>0.395 (s)</span></div>
          <h3>Structure range:</h3>
          <div class="r wide"><span>Top story</span><span>Story 4</span></div>
          <div class="r wide"><span>Bottom story</span><span>Story 1</span></div>
          <div class="r wide sub"><span>Effective height</span><span>H<sub>n</sub> = 15.80(m)</span></div>
          <h3>Base shear</h3>
          <div class="r far sub"><span>M<sub>v</sub> =</span><span>1.000</span></div>
          <div class="r far"><span>S(Ta) =</span><span>0.063</span></div>
          <div class="r wide"><span>Effective seismic weight</span><span>W =</span><span>288389.40 (kG)</span></div>
          <div class="r wide sub"><span></span><span>V<sub>min</sub> =</span><span>5.80</span></div>
          <div class="r wide"><span>Shear force</span><span>V =</span><span>91.85 (kN)</span></div>
          <div class="r wide sub"><span>Force at the top of the building</span><span>F<sub>t</sub> =</span><span>0.00 (kN)</span></div>
          <h3>Vertical distribution of seismic forces</h3>
          <table class="forces">
            <thead><tr><th>Story</th><th class="h">Height (m)</th><th class="w">Weight (kG)</th><th>F (kN)</th><th>M (kN*m)</th></tr></thead>
            <tbody>
              <tr><td>Story 1</td><td>4.57 <em>+461.2</em></td><td>109443.24</td><td>34.56</td><td class="m">0.00</td></tr>
              <tr><td>Story 2</td><td>3.05 <em>+461.2</em></td><td class="n">67546.93</td><td>21.47</td><td class="m">0.00</td></tr>
              <tr><td>Story 3</td><td>3.35 <em>+461.2</em></td><td class="n">59435.85</td><td>19.03</td><td class="m">0.00</td></tr>
              <tr><td>Story 4</td><td>4.83 <em>+461.2</em></td><td class="n">51963.38</td><td>16.80</td><td class="m">0.00</td></tr>
            </tbody>
          </table>
        </article>
        <div class="vscroll"><i class="up"></i><i class="fill"></i><i class="thumb short"><i class="grip"></i></i><i class="gap-end"></i><i class="down"></i></div>
      </div>
    </div>
    <span class="mark mark1"></span><span class="num num1">1</span>
    <span class="mark mark2"></span><span class="num num2">2</span>
  </section>

  <!-- Stories window -->
  <section class="window stories">
    <div class="win-title">
      <svg width="12" height="15"><use href="#i-story"/></svg>
      <h2>Stories</h2>
      <div class="winbtns dark"><button aria-label="Minimize"><i class="min"></i></button><button aria-label="Maximize" disabled><i class="max"></i></button><button class="close" aria-label="Close"><svg width="12" height="10" viewBox="0 0 12 10"><path d="M2 1l8 8M10 1L2 9" stroke="#633" stroke-width="4"/><path d="M2 1l8 8M10 1L2 9" stroke="#fff" stroke-width="3"/></svg></button></div>
    </div>
    <form class="win-body">
      <fieldset class="base">
        <legend>Define the building base level</legend>
        <div class="line"><label for="base">Building base level:</label><input id="base" type="text" value="461.20"><span class="unit">(m)</span><button type="button">Set</button></div>
      </fieldset>
      <fieldset class="defined">
        <legend>Defined stories</legend>
        <label class="radio"><input type="radio" name="mode" checked>Define graphically</label>
        <div class="line top-level"><label for="top">Top level:</label><input id="top" class="green" type="text" value="477.00"><span class="unit">(m)</span></div>
        <label class="radio second-radio"><input type="radio" name="mode">Define manually</label>
        <div class="manual">
          <label for="ref">Reference level:</label><label for="rep">No. of repet:</label><label for="hgt">Height:</label><span></span>
          <input id="ref" type="text" value="Story 4" disabled>
          <div class="spin"><input id="rep" type="text" value="1" disabled><div><button type="button" disabled aria-label="Up"></button><button type="button" class="dn" disabled aria-label="Down"></button></div></div>
          <input id="hgt" type="text" value="4.57" disabled><span class="unit off">(m)</span>
        </div>
        <div class="btn-row end"><button type="button">Add</button></div>
        <div class="list">
          <table>
            <thead><tr><th>Name</th><th>Top level</th><th>Height</th><th>C...</th><th></th></tr></thead>
            <tbody>
              <tr><td>Story 4</td><td>477.00</td><td>4.83</td><td><i class="swatch c4"></i></td><td></td></tr>
              <tr><td>Story 3</td><td>472.17</td><td>3.35</td><td><i class="swatch c3"></i></td><td></td></tr>
              <tr><td>Story 2</td><td>468.82</td><td>3.05</td><td><i class="swatch c2"></i></td><td></td></tr>
              <tr><td>Story 1</td><td>465.77</td><td>4.57</td><td><i class="swatch c1"></i></td><td></td></tr>
            </tbody>
          </table>
        </div>
        <div class="btn-row end del"><button type="button">Delete</button><button type="button">Delete all</button></div>
        <div class="line numbering"><label for="numb">Numbering:</label><select id="numb"><option>Story 1,2,...</option></select><input type="text" aria-label="Numbering format" value="Level %+v" disabled></div>
      </fieldset>
      <button type="button" class="advanced">Advanced options</button>
      <div class="btn-row foot"><button type="button" class="default">Apply</button><button type="button">Close</button><button type="button">Help</button></div>
    </form>
  </section>

  <!-- Analysis type window -->
  <section class="window analysis">
    <div class="win-title">
      <svg width="16" height="16" viewBox="0 0 16 16"><path d="M0 0h16v16H0z" fill="#f7b548"/><path d="M3 1l4 4v6l-4 4z" fill="#6b3d08"/><path d="M7 6l7-5-3 7 4 7-4-1-4-4z" fill="#a8640c"/></svg>
      <h2>Analysis Type</h2>
      <div class="winbtns"><button aria-label="Minimize"><i class="min"></i></button><button aria-label="Maximize" disabled><i class="max"></i></button><button class="close" aria-label="Close"><svg width="12" height="10" viewBox="0 0 12 10"><path d="M2 1l8 8M10 1L2 9" stroke="#556" stroke-width="4"/><path d="M2 1l8 8M10 1L2 9" stroke="#fff" stroke-width="2"/></svg></button></div>
    </div>
    <form class="win-body">
      <div class="tabs">
        <button type="button">Analysis Types</button><button type="button">Structure Model</button><button type="button" class="on">Load to Mass Conversion</button><button type="button">Combination Sign</button><button type="button" class="cut">Result Filters</button>
        <button type="button" class="arrow al" aria-label="Scroll left"></button><button type="button" class="arrow ar" aria-label="Scroll right"></button>
      </div>
      <div class="panel">
        <fieldset>
          <legend>Conversion parameters</legend>
          <div class="params">
            <label for="cases">Convert cases</label>
            <div class="cell"><input id="cases" type="text" value="2"><button type="button" class="dotbtn">...</button></div>
            <span>Mass direction</span>
            <div class="cell checks"><label>X<input type="checkbox" checked></label><label>Y<input type="checkbox" checked></label><label>Z<input type="checkbox" checked></label></div>
            <label for="dir">Conversion direction</label>
            <div class="cell"><select id="dir"><option>Z -</option></select></div>
            <label for="addto">Add mass to</label>
            <select id="addto"><option>Dynamic mass</option></select>
            <label for="coef">Coefficient</label>
            <div class="cell"><input id="coef" class="wide-in" type="text" value="0.5"></div>
          </div>
          <div class="btn-row"><button type="button">Add</button><button type="button">Modify</button></div>
        </fieldset>
        <div class="list">
          <table>
            <thead><tr><th>Converted Ca...</th><th>Conversion Di...</th><th>Coefficient</th><th>Direction</th><th>Case No.</th></tr></thead>
            <tbody>
              <tr><td><svg width="16" height="12" viewBox="0 0 16 12"><path d="M0 4h8V0l8 5.500L8 11V7H0z" fill="#e00" stroke="#700" stroke-width=".5"/></svg>2</td><td class="z">Z -</td><td>0.50</td><td>XYZ</td><td>Dynamic mass</td></tr>
              <tr><td>8</td><td class="z">Z -</td><td>0.50</td><td>XYZ</td><td>Dynamic mass</td></tr>
              <tr><td>9</td><td class="z">Z -</td><td>0.50</td><td>XYZ</td><td>Dynamic mass</td></tr>
              <tr><td>3</td><td class="z">Z -</td><td>0.25</td><td>XYZ</td><td>Dynamic mass</td></tr>
              <tr><td>1</td><td class="z">Z -</td><td>1.00</td><td>XYZ</td><td>Dynamic mass</td></tr>
            </tbody>
          </table>
        </div>
        <div class="btn-row left-row"><button type="button">Delete</button></div>
      </div>
      <div class="analysis-foot">
        <label><input type="checkbox" checked>Model generation</label>
        <button type="button" class="calc">Calculations</button><button type="button">Close</button><button type="button">Help</button>
      </div>
    </form>
    <span class="mark mark3"></span><span class="num num3">3</span>
  </section>
</body>
</html>
```
FILE: styles.css
```
* {
  box-sizing: border-box;
}
body {
  margin: 0;
  font-family: "Liberation Sans", Arial, sans-serif;
  font-size: 11px;
  color: #000;
  overflow: hidden;
}
button,
input,
select {
  font: inherit;
  color: inherit;
  margin: 0;
}
ul {
  list-style: none;
  margin: 0;
  padding: 0;
}
h2,
h3,
p {
  margin: 0;
}
a {
  color: inherit;
  text-decoration: none;
}
svg {
  display: block;
  flex: none;
}
table {
  border-collapse: collapse;
  table-layout: fixed;
}
th {
  font-weight: normal;
  text-align: left;
}
.defs {
  position: absolute;
}
.app {
  height: 100vh;
  display: flex;
  flex-direction: column;
  background-color: #f0f0f0;
}

/* Title bar and menu */
.titlebar {
  height: 17px;
  flex: none;
  display: flex;
  background: linear-gradient(90deg, #8c8c8c, #a8a8a8 18%, #8f9391 60%, #8b9492);
  border-top: 1px solid #000;
  border-bottom: 1px solid #333;
  font-family: "Open Sans", sans-serif;
}
.pro {
  width: 39px;
  height: 33px;
  flex: none;
  position: relative;
  z-index: 2;
  background: linear-gradient(#bbb, #777);
  border: 1px solid #222;
}
.pro b {
  display: block;
  text-align: center;
  font-size: 8px;
  line-height: 9px;
}
.titlebar-text {
  margin-left: 250px;
  flex: 1;
  font-size: 11px;
  line-height: 10px;
  white-space: nowrap;
}
.search {
  display: flex;
  align-items: center;
  background-color: #777;
  width: 193px;
}
.search-arrow {
  border: 4px solid transparent;
  border-left-color: #000;
  border-right: 0;
  margin: 0 6px 4px 5px;
}
.search input {
  width: 178px;
  height: 15px;
  border: 0;
  padding: 0 3px;
  background-color: #f2f2f2;
  font-style: italic;
  font-size: 11px;
}
.title-icons {
  display: flex;
  width: 145px;
  gap: 8px;
  padding-left: 5px;
  background-color: #878787;
}
.title-help {
  margin-left: 11px;
}
.caret {
  border: 3px solid transparent;
  border-top-color: #333;
  margin-top: 4px;
}
.main-btns {
  margin: -6px 0 0 17px;
}
.menubar {
  height: 21px;
  flex: none;
  display: flex;
  align-items: center;
  padding-left: 53px;
  background: linear-gradient(#4a4a4a, #8a8a8a 12%, #555);
  color: #fff;
  font-family: "Open Sans", sans-serif;
  font-size: 12px;
  gap: 22px;
}
.mdi {
  margin-left: auto;
}

/* Toolbars */
.toolbars {
  flex: none;
  background: linear-gradient(#fff, #d3daed 20%, #d3daed 75%, #dfe5f4);
  border-bottom: 1px solid #888;
  height: 63px;
}
.toolbar {
  display: flex;
  align-items: center;
  height: 31px;
  background-color: #f0f0f0;
}
.toolbars > .toolbar {
  width: 1190px;
  max-width: 71vw;
  padding-left: 5px;
  border-bottom: 1px solid #aaa;
}
.toolbar button {
  width: 32px;
  height: 30px;
  padding: 0;
  border: 0;
  background: none;
  display: flex;
  align-items: center;
  justify-content: center;
}
.toolbar button.gap {
  margin-left: 8px;
}
.toolbar button.pressed {
  border: 1px solid #999;
  background-color: #f8f8f8;
  margin-left: 8px;
}
.toolbar button.pressed.gap2 {
  margin-left: 3px;
}
.layout-combo {
  display: flex;
  align-items: center;
  width: 110px;
  height: 28px;
  padding-left: 2px;
  background-color: #fff;
  font-family: "Open Sans", sans-serif;
}
.layout-combo select {
  appearance: none;
  border: 0;
  background: none;
  padding: 0 1px;
}
.toolbar-row {
  display: flex;
  gap: 432px;
}
.second {
  padding-left: 6px;
  width: 774px;
  gap: 5px;
  border-right: 1px solid #999;
}
.second svg {
  margin: 0 2px;
}
.toolbar .combo {
  appearance: none;
  width: 119px;
  height: 20px;
  padding: 0 3px;
  border: 1px solid #e3e3e3;
  border-radius: 0;
  background: #fff url("data:image/svg+xml,%3Csvg xmlns='http://www.w3.org/2000/svg' width='8' height='5'%3E%3Cpath d='M0 0h8L4 4z'/%3E%3C/svg%3E") no-repeat right 4px center;
}
.toolbar .combo:disabled {
  background-color: #f0f0f0;
  border-color: #bbb;
}
.toolbar .g-bar {
  margin-left: 8px;
}
.toolbar-row .toolbar button.pressed {
  margin: 0 0 0 4px;
  height: 28px;
  width: 31px;
}
.toolbar .g-load {
  margin-left: 4px;
}
.toolbar .g-def {
  margin: 0 4px 0 8px;
}
.third {
  width: 100px;
  gap: 12px;
  padding-left: 4px;
  border-top: 1px solid #999;
  border-right: 1px solid #999;
}

/* Object inspector */
.workspace {
  flex: 1;
  min-height: 0;
  display: flex;
}
.dock {
  width: 241px;
  flex: none;
  display: flex;
  flex-direction: column;
  border-right: 2px solid #777;
  padding-left: 1px;
}
.dock-title {
  display: flex;
  justify-content: space-between;
  align-items: center;
  height: 15px;
  margin: 0 3px 0 1px;
  padding-right: 4px;
  border-bottom: 1px solid #999;
  border-right: 1px solid #666;
}
.dock-title button {
  width: 10px;
  height: 10px;
  padding: 0;
  border: 0;
  line-height: 9px;
  background-color: #ccc;
  color: #555;
}
.dock-tools {
  display: flex;
  align-items: center;
  height: 32px;
  padding-left: 9px;
  gap: 10px;
}
.dock-tools .find {
  margin-left: 5px;
}
.sep {
  width: 1px;
  height: 18px;
  background-color: #999;
}
.sep:last-of-type {
  margin: 0 -3px;
}
.tree {
  flex: none;
  height: 363px;
  margin: 0 8px 0 1px;
  background-color: #fff;
  border: 1px solid #888;
  border-left: 2px solid #777;
}
.tree-head {
  display: flex;
  height: 19px;
  line-height: 20px;
  background: linear-gradient(#fff, #f2f3f5);
  border-bottom: 1px solid #d5d5d5;
}
.tree-head span {
  border-right: 1px solid #ddd;
  padding-left: 6px;
}
.tree-head span:first-child {
  width: 141px;
}
.tree-head span:nth-child(2) {
  width: 70px;
}
.tree-list {
  padding: 2px 0 0 4px;
}
.tree-list li {
  height: 16px;
  display: flex;
  align-items: center;
}
.tree-list li.l2 {
  padding-left: 20px;
}
.box {
  width: 9px;
  height: 9px;
  flex: none;
  border: 1px solid #848484;
  background: linear-gradient(#000, #000) center / 5px 1px no-repeat;
}
.box.plus {
  background: linear-gradient(#000, #000) center / 5px 1px no-repeat, linear-gradient(#000, #000) center / 1px 5px no-repeat;
}
.box.none {
  border: 0;
  border-left: 1px dotted #999;
  margin-left: 4px;
  width: 5px;
  background: none;
}
.dots {
  width: 6px;
  flex: none;
  border-top: 1px dotted #999;
  margin: 0 5px 0 1px;
}
.dots.long {
  width: 13px;
  margin-right: 4px;
}
.tree-list svg {
  margin-right: 5px;
}
.tree-list .obj svg {
  margin-right: 4px;
}
.tree-list .obj .dots {
  margin-right: 4px;
}
.obj span {
  width: 85px;
}
.obj b {
  font-weight: normal;
}
.sheet-tabs {
  display: flex;
  height: 18px;
  flex: none;
  margin: 3px 3px 0 0;
  border-top: 1px solid #000;
}
.sheet-tabs button {
  width: 18px;
  height: 17px;
  padding: 0;
  border: 1px solid #aaa;
  background-color: #f0f0f0;
  display: flex;
  align-items: center;
  justify-content: center;
}
.nav-l::before,
.nav-r::before {
  content: "";
  border: 4px solid transparent;
  border-right: 5px solid #888;
  border-left: 0;
}
.nav-r::before {
  border-right: 0;
  border-left: 5px solid #888;
}
.sheet-tabs a {
  line-height: 16px;
  padding: 0 7px;
}
.sheet-tabs .on {
  font-family: "DejaVu Sans Condensed", sans-serif;
  font-size: 11px;
  font-weight: bold;
  background-color: #fff;
  padding: 0 4px 0 3px;
}
.props {
  flex: 1;
  min-height: 0;
  display: flex;
  margin: 4px 6px 0 0;
  border-top: 2px solid #777;
}
.props-main {
  flex: 1;
}
.props-table {
  width: 203px;
}
.props-table th {
  height: 19px;
  padding: 0;
  text-align: center;
  font-size: 12px;
  background-color: #c0c0c0;
  border: 1px solid #888;
}
.props-table th:first-child {
  width: 86px;
}
.props-table th:nth-child(2) {
  width: 82px;
}
.vscroll {
  width: 16px;
  flex: none;
  display: flex;
  flex-direction: column;
  align-items: center;
  background-color: #f0f0f0;
}
.up,
.down,
.left,
.right {
  flex: none;
  margin: 7px 0;
  border: 3px solid transparent;
  border-top-width: 0;
  border-bottom: 4px solid #444;
}
.down {
  border-bottom-width: 0;
  border-top: 4px solid #444;
}
.thumb {
  width: 14px;
  flex: 1;
  border: 1px solid #999;
  border-radius: 2px;
  background: linear-gradient(90deg, #f5f5f5, #d2d2d6);
  display: flex;
  align-items: center;
  justify-content: center;
}
.grip {
  width: 7px;
  height: 8px;
  background: repeating-linear-gradient(#666 0 1px, transparent 1px 3px);
}
.strip {
  height: 17px;
  flex: none;
  margin-right: 5px;
  border-top: 1px solid #000;
  background: linear-gradient(#fff, #eee);
}
.dock-btns {
  display: flex;
  flex: none;
  gap: 1px;
  height: 26px;
  padding-top: 4px;
}
.dock-btns button {
  width: 22px;
  height: 18px;
  padding: 0;
  border: 1px solid #fff;
  border-right: 2px solid #444;
  border-bottom: 2px solid #444;
  background-color: #f0f0f0;
  display: flex;
  align-items: center;
  justify-content: center;
}
.dock-btns .on {
  width: 18px;
  background-color: #fff;
}

/* 3D view */
.view {
  flex: 1;
  min-width: 0;
  display: flex;
  border-top: 1px solid #666;
}
.view-col {
  flex: 1;
  min-width: 0;
  display: flex;
  flex-direction: column;
}
.view-head {
  height: 22px;
  flex: none;
  border-bottom: 1px solid #888;
}
.view-head span {
  display: block;
  width: 40px;
  height: 21px;
  padding-left: 9px;
  line-height: 19px;
  background-color: #fff;
}
.canvas {
  flex: 1;
  min-height: 0;
  position: relative;
  overflow: hidden;
  background: linear-gradient(#f0f0ee, #e4eaf4 35%, #d5e3fb 70%, #c8dcff);
  border-right: 1px solid #000;
  border-bottom: 1px solid #000;
}
.model {
  position: absolute;
  right: 0;
  bottom: 0;
}
.cube-text {
  font-size: 30px;
  font-weight: bold;
}
.inset {
  position: absolute;
  left: 3px;
  bottom: 2px;
  width: 108px;
  height: 107px;
  border: 1px solid #999;
  border-right-color: #000;
  border-bottom-color: #000;
}
.inset b {
  position: absolute;
  left: 12px;
  bottom: 29px;
  font-size: 15px;
  color: #00f;
}
.legend {
  position: absolute;
  right: 44px;
  bottom: 23px;
  color: #f00;
  font-size: 18px;
}
.legend li {
  display: flex;
  align-items: center;
  height: 23px;
  padding-left: 12px;
}
.legend i {
  width: 60px;
  height: 3px;
  margin-right: 6px;
}
.legend p {
  margin-top: 25px;
  line-height: 23px;
}
.c4 {
  background-color: #0000ff;
}
.c3 {
  background-color: #c0c000;
}
.c2 {
  background-color: #000080;
}
.c1 {
  background-color: #c0ffc0;
}
.chips {
  position: absolute;
  left: 463px;
  bottom: 1px;
  display: flex;
  gap: 4px;
}
.chips span,
.chip-view {
  width: 78px;
  height: 15px;
  line-height: 15px;
  border-radius: 2px;
  text-align: center;
  font-family: "Open Sans", sans-serif;
  font-size: 12px;
  font-weight: bold;
  color: #fff;
  background: linear-gradient(#999, #555);
}
.chips span:last-child {
  width: 92px;
}
.chip-view {
  position: absolute;
  right: 2px;
  bottom: 1px;
  width: 109px;
  color: #c3d0e4;
  background: linear-gradient(#afbcd2, #9fadc4);
}
.view-foot {
  height: 18px;
  flex: none;
  display: flex;
  align-items: center;
  padding-left: 2px;
  gap: 2px;
}
.view-foot button {
  width: 21px;
  height: 16px;
  flex: none;
  padding: 0;
  border: 1px solid #777;
  border-radius: 3px;
  background-color: #f4f4f4;
  display: flex;
  align-items: center;
  justify-content: center;
}
.view-foot button.on {
  border: 2px solid #4a7ea8;
  background-color: #d5ecfa;
}
.bracket {
  width: 5px;
  height: 15px;
  border: 1px solid #777;
  border-right: 0;
  border-radius: 2px;
}
.hscroll {
  flex: 1;
  display: flex;
  align-items: center;
  justify-content: space-between;
  height: 16px;
  padding: 0 5px;
}
.left,
.right {
  margin: 0;
  border: 3px solid transparent;
  border-right: 4px solid #333;
  border-left: 0;
}
.right {
  border-left: 4px solid #333;
  border-right: 0;
}
.hthumb {
  width: 444px;
  height: 14px;
  border: 1px solid #999;
  border-radius: 2px;
  background: linear-gradient(#f5f5f5, #cfcfcf);
}
.view .vscroll {
  margin: 0 2px 0 1px;
}
.big .space {
  flex: 302;
}
.big .thumb {
  flex: 207;
}
.big .space2 {
  flex: 296;
}
.big .down {
  margin-bottom: 24px;
}
.side {
  width: 30px;
  flex: none;
  background: linear-gradient(#d3daed 85%, #e6ebf7);
}
.side-tools {
  display: flex;
  flex-direction: column;
  align-items: center;
  gap: 10px;
  padding: 8px 0 5px;
  border-top: 3px dotted #aaa;
  border-bottom: 1px solid #999;
  background-color: #f0f0f0;
}
.side-tools .sp {
  margin-top: 4px;
}

.doc-tabs {
  height: 20px;
  flex: none;
  background-color: #f0eceb;
  border-top: 1px solid #777;
  border-bottom: 1px solid #999;
}
.doc-tabs span {
  display: block;
  width: 40px;
  padding-left: 3px;
  line-height: 18px;
  background-color: #fff;
}
.status {
  display: flex;
  height: 12px;
  flex: none;
  overflow: hidden;
  font-family: "Open Sans", sans-serif;
  font-size: 12px;
  line-height: 17px;
  white-space: nowrap;
}
.status span {
  display: flex;
  align-items: center;
  gap: 5px;
  height: 17px;
}
.st-result {
  margin-left: 634px;
  width: 552px;
}
.st-result i {
  width: 12px;
  height: 12px;
  border-radius: 50%;
  background-color: #2c2;
  border: 1px solid #161;
}
.st-xyz {
  width: 172px;
}
.st-val {
  width: 98px;
  padding-left: 6px;
  border-left: 1px solid #bbb;
}
.st-val i {
  width: 12px;
  height: 8px;
  border: 1px solid #000;
  border-top: 2px solid #c00;
}
.st-units {
  padding-left: 8px;
  border-left: 1px solid #bbb;
}

/* Windows */
.window {
  position: absolute;
  display: flex;
  flex-direction: column;
  border: 1px solid #333;
  border-radius: 7px;
  padding: 0 6px 6px;
  background: linear-gradient(100deg, #e6e6e6, #cfd3d8 12%, #d4d9df 60%, #c5d3e6);
  box-shadow: inset 0 0 0 1px #fff9, 0 1px 8px #0008;
}
.win-title {
  display: flex;
  align-items: center;
  height: 28px;
  flex: none;
}
.win-title h2 {
  font-family: "Open Sans", sans-serif;
  font-size: 12px;
  font-weight: normal;
  line-height: 14px;
  padding-bottom: 3px;
  flex: 1;
}
.win-body {
  flex: 1;
  min-height: 0;
  border: 1px solid #555;
  outline: 1px solid #fff8;
  background-color: #f0f0f0;
}
.winbtns {
  display: flex;
  align-self: flex-start;
  border: 1px solid #888;
  border-top: 0;
  border-radius: 0 0 5px 5px;
  overflow: hidden;
}
.winbtns button {
  width: 28px;
  height: 18px;
  padding: 0;
  border: 0;
  border-right: 1px solid #999;
  background: linear-gradient(#f0f0f0aa, #c8ccd0aa);
  display: flex;
  align-items: center;
  justify-content: center;
}
.winbtns button.close {
  width: 45px;
  border-right: 0;
}
.winbtns .min {
  width: 12px;
  height: 5px;
  margin-top: 4px;
  border: 1px solid #445;
  border-radius: 1px;
  background-color: #fff;
}
.winbtns .max {
  width: 11px;
  height: 9px;
  border: 1px solid #445;
  background-color: #fff;
  box-shadow: inset 0 0 0 2px #fff, inset 0 0 0 3px #445;
}
.winbtns button:disabled .max {
  opacity: 0.4;
}
.dark {
  border-color: #444;
}
.dark button {
  background: linear-gradient(#c8c8c8, #888 50%, #999);
  border-color: #555;
}
.dark button.close {
  background: linear-gradient(#d09488, #b83a22 50%, #c8502f);
}

/* Report */
.report {
  left: 267px;
  top: 98px;
  width: 585px;
  height: 824px;
}
.report .win-title {
  gap: 6px;
  padding-left: 1px;
}
.report .win-title h2 {
  font-size: 11px;
}
.report .win-body {
  display: flex;
  flex-direction: column;
}
.report-menu {
  display: flex;
  gap: 12px;
  height: 20px;
  flex: none;
  padding-left: 6px;
  line-height: 18px;
  font-family: "Open Sans", sans-serif;
  font-size: 12px;
  color: #707070;
  background: linear-gradient(#fff, #e4e9f5 40%, #d4dbee 60%, #dbe2f1);
}
.report-area {
  flex: 1;
  display: flex;
  margin-bottom: 4px;
  border-top: 2px solid #666;
  border-left: 1px solid #666;
  border-bottom: 1px solid #ddd;
  background-color: #fff;
}
.report-area .vscroll {
  margin-right: 2px;
}
.doc {
  flex: 1;
  padding: 16px 0 0 9px;
  font-size: 13px;
  line-height: 16px;
  white-space: nowrap;
}
.doc h3 {
  font-size: 13px;
}
.doc .after-gap {
  margin-top: 80px;
}
.case {
  display: grid;
  grid-template-columns: 143px 37px auto;
}
.r {
  display: grid;
  height: 16px;
  padding-left: 48px;
}
.r.sub {
  height: 19px;
}
.r sub {
  font-size: 10px;
  line-height: 0;
}
.xyz {
  grid-template-columns: 43px auto;
}
.soil {
  grid-template-columns: 144px auto;
}
.val {
  grid-template-columns: 164px auto;
}
.wide {
  grid-template-columns: 189px 48px auto;
}
.r.wide > span:nth-child(2):last-child {
  grid-column: 2 / 4;
}
.far {
  grid-template-columns: 257px auto;
}
.forces {
  width: 470px;
  margin-left: 48px;
}
.forces th,
.forces td {
  height: 16px;
  padding: 0;
}
.forces th:nth-child(1) {
  width: 91px;
}
.forces th:nth-child(2) {
  width: 81px;
}
.forces th:nth-child(3) {
  width: 116px;
}
.forces th:nth-child(4) {
  width: 96px;
}
.forces .h {
  padding-left: 5px;
}
.forces .w {
  padding-left: 20px;
}
.forces .n {
  padding-left: 3px;
}
.forces .m {
  padding-left: 10px;
}
.forces em {
  font-family: "Open Sans", sans-serif;
  font-style: normal;
  font-size: 11px;
  line-height: 12px;
  color: #ed1c24;
}
.report .fill {
  flex: 1;
}
.report .short {
  flex: none;
  height: 42px;
}
.gap-end {
  height: 4px;
}
.mark {
  position: absolute;
  border: 5px solid #ed1c24;
}
.num {
  position: absolute;
  font-family: "Open Sans", sans-serif;
  font-size: 26px;
  line-height: 26px;
  color: #ed1c24;
}
.mark1 {
  left: 312px;
  top: 591px;
  width: 52px;
  height: 24px;
}
.num1 {
  left: 365px;
  top: 573px;
}
.mark2 {
  left: 341px;
  top: 686px;
  width: 63px;
  height: 103px;
}
.num2 {
  left: 410px;
  top: 762px;
}

/* Dialog controls */
fieldset {
  margin: 0;
  min-width: 0;
  border: 1px solid #d5dfe5;
  border-radius: 3px;
}
legend {
  padding: 0 3px;
  line-height: 14px;
}
.stories form button,
.analysis form button {
  height: 21px;
  padding: 0;
  border: 1px solid #707070;
  border-radius: 3px;
  background: linear-gradient(#f2f2f2, #ebebeb 50%, #ddd 50%, #cfcfcf);
}
.window input[type="text"] {
  height: 20px;
  padding: 0 2px;
  border: 1px solid #dde1e6;
  border-top-color: #abadb3;
  border-radius: 2px;
  background-color: #fff;
}
.window input[type="text"]:disabled {
  border-color: #aaa;
  background-color: #f0f0f0;
  color: #6d6d6d;
}
.window select {
  appearance: none;
  height: 21px;
  padding: 0 3px;
  border: 1px solid #707070;
  border-radius: 3px;
  background: url("data:image/svg+xml,%3Csvg xmlns='http://www.w3.org/2000/svg' width='8' height='5'%3E%3Cpath d='M0 0h8L4 4z'/%3E%3C/svg%3E") no-repeat right 4px center, linear-gradient(#f2f2f2, #ebebeb 50%, #ddd 50%, #cfcfcf);
}
.line {
  display: flex;
  align-items: center;
}
.btn-row {
  display: flex;
}
.list {
  border: 1px solid #828790;
  background-color: #fff;
  overflow: hidden;
}
.list table {
  width: 100%;
}
.list th {
  border-right: 1px solid #dedfe1;
  border-bottom: 1px solid #d5d5d5;
  background: linear-gradient(#fff 50%, #f3f4f6);
  white-space: nowrap;
}
.list th:last-child {
  border-right: 0;
}

/* Stories */
.stories {
  left: 883px;
  top: 31px;
  width: 322px;
  height: 514px;
  border-color: #111;
  background: linear-gradient(100deg, #b8b8b8, #c4c4c4 10%, #8d9099 35%, #a9abb2);
  box-shadow: inset 0 0 0 1px #fff8, 0 2px 12px 2px #000a;
}
.stories .win-title {
  gap: 7px;
  padding-left: 3px;
}
.stories form {
  padding: 6px 7px 9px 6px;
}
.stories fieldset {
  padding: 0 9px 5px 10px;
}
.stories legend {
  margin-left: -5px;
}
.base .line {
  padding-top: 1px;
}
.base label {
  width: 145px;
}
.base input {
  width: 54px;
}
.base .unit {
  width: 33px;
  padding-left: 3px;
}
.base button {
  width: 45px;
}
.unit.off {
  color: #a0a0a0;
}
.stories .defined {
  margin-top: 5px;
  padding-top: 6px;
}
.radio {
  display: flex;
  align-items: center;
  height: 15px;
}
.radio input {
  width: 12px;
  height: 12px;
  margin-right: 4px;
  accent-color: #1f5f8f;
}
.top-level label {
  width: 155px;
}
.top-level {
  padding-left: 18px;
}
.window input.green {
  width: 66px;
  margin-right: 4px;
  border: 1px solid #7eb4ea;
  background: #00ff00;
}
.second-radio {
  margin-top: 4px;
}
.manual {
  display: grid;
  grid-template-columns: 66px 64px 66px auto;
  column-gap: 15px;
  row-gap: 5px;
  padding: 4px 0 0 18px;
  color: #a0a0a0;
}
.manual label {
  line-height: 13px;
  height: 26px;
}
.manual label:nth-child(2) {
  white-space: nowrap;
}
.manual > :nth-child(4n+3) {
  margin-left: -5px;
  width: 66px;
}
.manual > :nth-child(4n) {
  margin-left: -16px;
  align-self: center;
}
.manual input {
  width: 66px;
}
.spin {
  display: flex;
  gap: 2px;
}
.spin input {
  width: 47px;
}
.stories form .spin button {
  display: block;
  width: 15px;
  height: 10px;
  border-color: #bbb;
  border-radius: 0;
}
.spin button::before {
  content: "";
  display: block;
  width: 0;
  margin: auto;
  border: 2px solid transparent;
  border-top: 0;
  border-bottom: 3px solid #999;
}
.spin .dn::before {
  border-bottom: 0;
  border-top: 3px solid #999;
}
.end {
  justify-content: flex-end;
  margin: 6px 1px 0 0;
  gap: 14px;
}
.end.del {
  margin-top: 5px;
}
.stories .btn-row button {
  width: 82px;
}
.stories .list {
  height: 126px;
  margin-top: 8px;
}
.stories .list th {
  height: 24px;
  padding: 0 6px;
}
.stories .list th:nth-child(1) {
  width: 81px;
}
.stories .list th:nth-child(2) {
  width: 81px;
}
.stories .list th:nth-child(3) {
  width: 49px;
}
.stories .list th:nth-child(4) {
  width: 34px;
}
.stories .list td {
  height: 19px;
  padding: 0 6px;
}
.stories .list td:nth-child(4) {
  padding: 0 2px;
}
.swatch {
  display: block;
  width: 28px;
  height: 15px;
}
.numbering {
  margin-top: 8px;
}
.numbering label {
  width: 93px;
}
.numbering select {
  width: 84px;
  margin-right: 12px;
}
.numbering input {
  width: 84px;
}
.stories .advanced {
  display: block;
  width: 272px;
  margin: 9px 0 9px 12px;
}
.foot {
  gap: 11px;
  padding-left: 12px;
}
.foot button:last-child {
  margin-left: 3px;
}
.stories form button.default {
  border: 1px solid #2c628b;
  box-shadow: inset 0 0 0 2px #5ac8f0;
}

/* Analysis type */
.analysis {
  left: 868px;
  top: 554px;
  width: 494px;
  height: 443px;
  border-bottom: 0;
  border-radius: 7px 7px 0 0;
  background: linear-gradient(100deg, #cdd3da, #dbe4ef 40%, #c3cfe0);
}
.analysis .win-title {
  gap: 5px;
}
.analysis form {
  padding: 4px 6px 4px 2px;
  font-family: "DejaVu Sans Condensed", "DejaVu Sans", sans-serif;
  font-size: 11px;
  white-space: nowrap;
}
.tabs {
  display: flex;
  align-items: flex-end;
  height: 21px;
  padding-left: 1px;
}
.analysis .tabs button {
  height: 18px;
  width: 84px;
  flex: none;
  border-color: #898c95;
  border-bottom: 0;
  border-radius: 0;
}
.analysis .tabs button:nth-child(2) {
  width: 86px;
}
.analysis .tabs button:nth-child(4) {
  width: 95px;
}
.analysis .tabs button.on {
  position: relative;
  width: 135px;
  height: 21px;
  margin-bottom: -1px;
  background: #fff;
}
.analysis .tabs button.cut {
  width: 40px;
  padding-left: 4px;
  text-align: left;
  overflow: hidden;
  border-right: 0;
}
.analysis .tabs button.arrow {
  width: 16px;
  height: 16px;
  margin-bottom: 2px;
  border: 1px solid #bbb;
  display: flex;
  align-items: center;
  justify-content: center;
}
.arrow::before {
  content: "";
  border: 3px solid transparent;
  border-left: 0;
  border-right: 4px solid #468;
}
.analysis .ar::before {
  border-right: 0;
  border-left: 4px solid #468;
}
.panel {
  padding: 5px 5px 8px;
  border: 1px solid #898c95;
  background-color: #fff;
}
.panel fieldset {
  padding: 6px 11px 4px 7px;
}
.panel legend {
  margin-left: -3px;
}
.params {
  display: grid;
  grid-template-columns: 132px 104px 101px 102px;
  row-gap: 6px;
  align-items: center;
}
.params .cell {
  display: flex;
}
.cell select {
  width: 93px;
}
.window #cases {
  width: 63px;
  padding-left: 8px;
  margin-right: 7px;
}
.window input.wide-in {
  width: 93px;
  padding-left: 5px;
}
.window #dir {
  padding-left: 6px;
}
.analysis form .dotbtn {
  width: 21px;
  height: 19px;
  line-height: 12px;
}
.checks {
  justify-content: space-between;
  padding: 2px 1px 0 2px;
}
.checks label,
.analysis-foot label {
  display: flex;
  align-items: center;
  gap: 6px;
}
.analysis input[type="checkbox"] {
  appearance: none;
  width: 12px;
  height: 12px;
  border: 1px solid #8e8f8f;
  background: #e8eef6 url("data:image/svg+xml,%3Csvg xmlns='http://www.w3.org/2000/svg' width='10' height='10'%3E%3Cpath d='M2 5l2 3 4-7' fill='none' stroke='%23335a9c' stroke-width='2'/%3E%3C/svg%3E") center no-repeat;
}
.analysis .btn-row button {
  width: 73px;
}
.panel fieldset .btn-row {
  justify-content: flex-end;
  gap: 13px;
  margin: 5px 2px 0 0;
}
.analysis .list {
  height: 172px;
  margin-top: 11px;
}
.analysis .list th {
  height: 24px;
  padding: 4px 6px 0;
}
.analysis .list tbody tr:first-child td {
  height: 20px;
  padding-top: 3px;
}
.analysis .list td {
  height: 17px;
  padding: 0 6px;
}
.analysis .list td:first-child {
  padding-left: 25px;
}
.analysis .list td.z {
  padding-left: 9px;
}
.analysis .list svg {
  float: left;
  margin-left: -20px;
}
.left-row {
  margin: 5px 0 0 12px;
}
.analysis-foot {
  display: flex;
  align-items: center;
  gap: 7px;
  margin-top: 8px;
}
.analysis-foot label {
  flex: 1;
  gap: 3px;
}
.analysis .analysis-foot button {
  width: 73px;
  flex: none;
}
.analysis .analysis-foot .calc {
  width: 88px;
}
.mark3 {
  left: 33px;
  top: 288px;
  width: 430px;
  height: 22px;
}
.num3 {
  left: 152px;
  top: 318px;
  font-size: 24px;
}
```
